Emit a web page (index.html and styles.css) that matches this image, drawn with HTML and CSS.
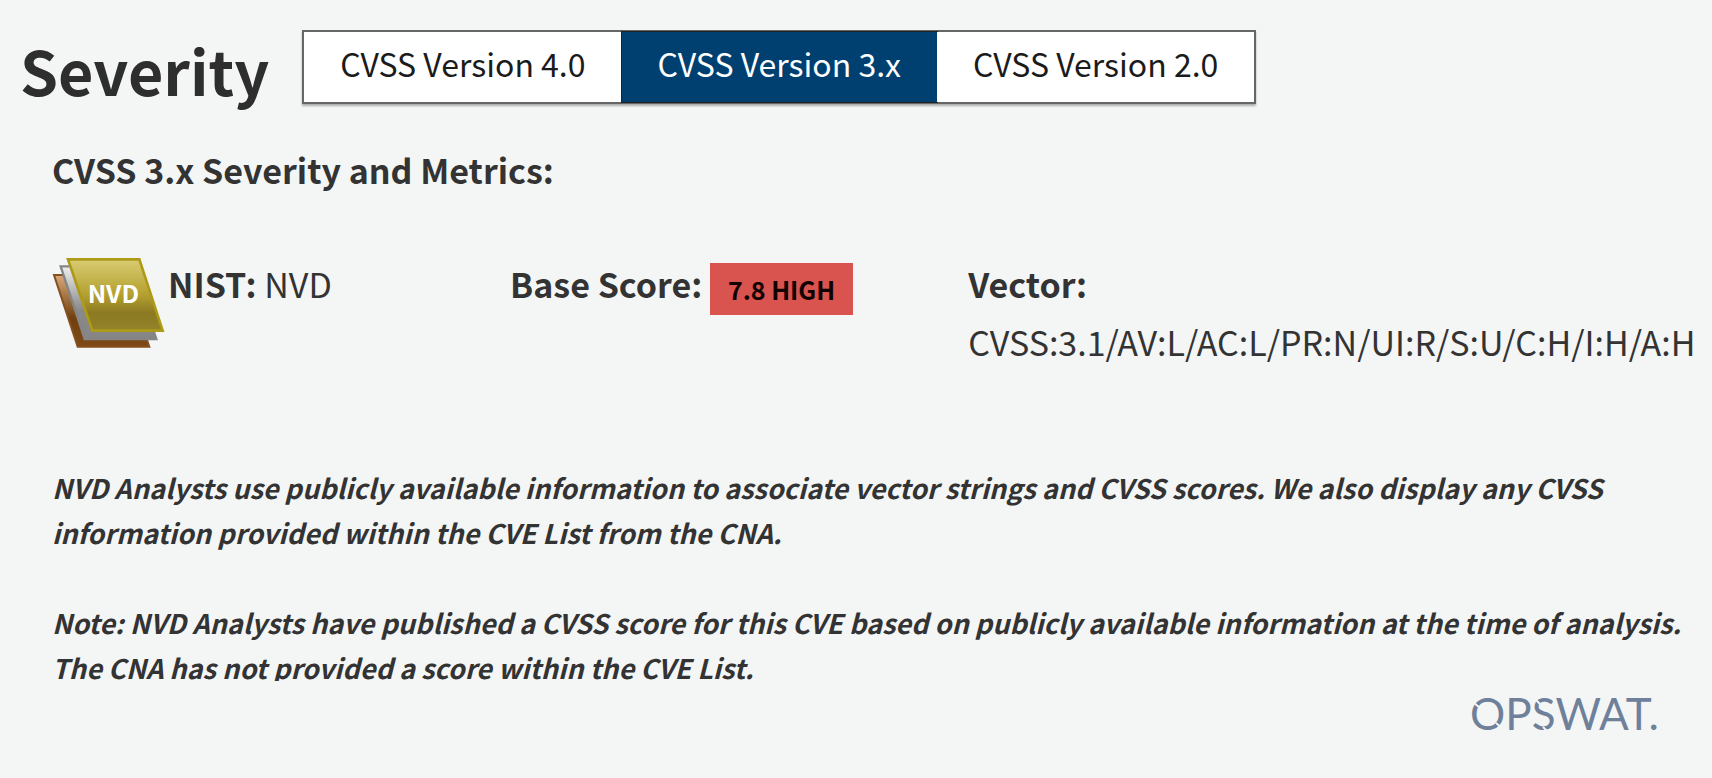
FILE: index.html
```
<!DOCTYPE html>
<html lang="en">
<head>
    <meta charset="utf-8">
    <title>CVSS Severity</title>
    <link rel="stylesheet" href="styles.css">
</head>
<body>

    <div class="header">
        <h1>Severity</h1>
        <div class="tabs">
            <button type="button">CVSS Version 4.0</button>
            <button type="button" class="active">CVSS Version 3.x</button>
            <button type="button">CVSS Version 2.0</button>
        </div>
    </div>

    <div class="content">
        <h2>CVSS 3.x Severity and Metrics:</h2>

        <div class="metrics">
            <div class="source">
                <svg class="nvd-icon" viewBox="36 34 339 276" aria-hidden="true">
                    <defs>
                        <linearGradient id="gold" x1="0" y1="0" x2="0" y2="1">
                            <stop offset="0" stop-color="#d9cc72"/>
                            <stop offset="0.5" stop-color="#b4a030"/>
                            <stop offset="0.75" stop-color="#8c7a22"/>
                            <stop offset="1" stop-color="#94832a"/>
                        </linearGradient>
                        <linearGradient id="silver" x1="0" y1="0" x2="0" y2="1">
                            <stop offset="0" stop-color="#eeeeee"/>
                            <stop offset="0.6" stop-color="#8a8a8a"/>
                            <stop offset="1" stop-color="#858585"/>
                        </linearGradient>
                        <linearGradient id="bronze" x1="0" y1="0" x2="0" y2="1">
                            <stop offset="0" stop-color="#d9a878"/>
                            <stop offset="0.6" stop-color="#70400e"/>
                            <stop offset="1" stop-color="#7d4a18"/>
                        </linearGradient>
                    </defs>
                    <path d="M42 88H255L328 303H113Z" fill="url(#bronze)" stroke="#84501f" stroke-width="6"/>
                    <path d="M62 62H277L349 280H134Z" fill="url(#silver)" stroke="#858585" stroke-width="7"/>
                    <path d="M84 41H298L368 255H157Z" fill="url(#gold)" stroke="#ad9a17" stroke-width="8"/>
                    <text class="nvd-text" x="220" y="173" text-anchor="middle">NVD</text>
                </svg>
                <p><strong>NIST:</strong> NVD</p>
            </div>
            <p><strong>Base Score:</strong> <a href="#" class="badge">7.8 HIGH</a></p>
            <div>
                <p><strong>Vector:</strong></p>
                <p>CVSS:3.1/AV:L/AC:L/PR:N/UI:R/S:U/C:H/I:H/A:H</p>
            </div>
        </div>

        <div class="notes">
            <p>NVD Analysts use publicly available information to associate vector strings and CVSS scores. We also display any CVSS information provided within the CVE List from the CNA.</p>
            <p>Note: NVD Analysts have published a CVSS score for this CVE based on publicly available information at the time of analysis. The CNA has not provided a score within the CVE List.</p>
        </div>
    </div>

    <div class="footer">
        <svg class="logo" width="196" height="60" viewBox="0 0 196 60">
            <text class="logo-text" x="0" y="45">OPSWAT.</text>
            <!-- stencil cuts -->
            <path class="logo-cuts" d="M3 17L10 23M26 38L33 44M66 15L71 20M73 42L78 47"/>
        </svg>
    </div>

</body>
</html>
```

FILE: styles.css
```
* {
    box-sizing: border-box;
}

body {
    font-family: "Noto Sans CJK SC", "Noto Sans", sans-serif;
    font-size: 34px;
    line-height: 58px;
    color: #333;
    background-color: #f4f6f6;
    margin: 0;
    padding: 30px 24px 0 20px;
}

h1, h2, p {
    margin: 0;
}

.header {
    display: flex;
    align-items: flex-start;
    gap: 33px;
}

h1 {
    font-size: 61px;
    line-height: 80px;
    color: #2e2e2e;
}

.tabs {
    display: flex;
    border: 2px solid #666;
    box-shadow: 0 2px 2px rgba(0, 0, 0, 0.3);
}

.tabs button {
    padding: 0 36px 8px;
    border: none;
    background-color: #fff;
    color: #1b1b1b;
    font-family: inherit;
    font-size: 32px;
    line-height: 62px;
    cursor: pointer;
}

.tabs .active {
    background-color: #004070;
    color: #fff;
    box-shadow: 0 0 0 1px #222;
}

.content {
    padding-left: 32px;
}

h2 {
    font-size: 34px;
    line-height: 58px;
    margin-top: 31px;
}

.metrics {
    display: grid;
    grid-template-columns: 28% 28% 1fr;
    margin-top: 56px;
}

.source {
    display: flex;
    gap: 3px;
}

.nvd-icon {
    width: 113px;
    height: 92px;
    margin-top: 2px;
}

.nvd-text {
    font-size: 74px;
    font-weight: bold;
    fill: #fff;
}

.badge {
    display: inline-block;
    vertical-align: middle;
    padding: 0 18px;
    background-color: #d9534f;
    color: #100000;
    font-size: 25px;
    font-weight: bold;
    line-height: 52px;
    text-decoration: none;
}

.notes {
    margin-top: 94px;
    max-height: 216px;
    overflow: hidden;
    font-size: 27px;
    font-weight: bold;
    font-style: italic;
    line-height: 45px;
}

.notes p + p {
    margin-top: 45px;
}

.footer {
    display: flex;
    justify-content: flex-end;
    margin-top: 4px;
    padding-right: 22px;
}

.logo-text {
    font-family: Lato, sans-serif;
    font-size: 44px;
    fill: #6f809b;
}

.logo-cuts {
    stroke: #f4f6f6;
    stroke-width: 2;
}
```
